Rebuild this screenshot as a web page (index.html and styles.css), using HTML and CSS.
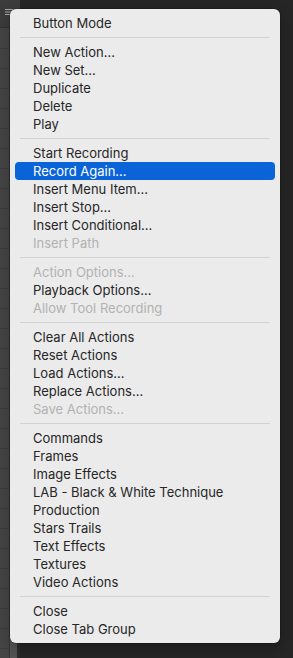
FILE: index.html
```html
<!DOCTYPE html>
<html>
<head>
<meta charset="utf-8">
<link rel="stylesheet" href="styles.css">
</head>
<body>
<div class="app">
  <div class="panel">
    <div class="panel-head">
      <svg class="burger" width="8" height="7" viewBox="0 0 8 7"><path d="M0 0.5H8M0 3H8M0 5.5H8" stroke="#a8a8a8" stroke-width="1"/></svg>
    </div>
    <div class="panel-body">
      <div class="rows">
        <div class="row"></div><div class="row"></div><div class="row"></div><div class="row"></div>
        <div class="row"></div><div class="row"></div><div class="row"></div><div class="row"></div>
        <div class="row"></div><div class="row"></div><div class="row"></div><div class="row"></div>
        <div class="row"></div><div class="row"></div><div class="row"></div><div class="row"></div>
        <div class="row"></div><div class="row"></div><div class="row"></div><div class="row"></div>
        <div class="row"></div><div class="row"></div><div class="row"></div><div class="row"></div>
        <div class="row"></div><div class="row"></div><div class="row"></div><div class="row"></div>
        <div class="row"></div><div class="row"></div><div class="row"></div>
      </div>
      <div class="gutter"></div>
      <div class="track">
        <div class="track-fill"></div>
        <div class="track-thumb"></div>
      </div>
    </div>
  </div>
  <div class="main"></div>

  <div class="menu">
    <div class="item">Button Mode</div>
    <div class="sep"></div>
    <div class="item">New Action...</div>
    <div class="item">New Set...</div>
    <div class="item">Duplicate</div>
    <div class="item">Delete</div>
    <div class="item">Play</div>
    <div class="sep"></div>
    <div class="item">Start Recording</div>
    <div class="item active">Record Again...</div>
    <div class="item">Insert Menu Item...</div>
    <div class="item">Insert Stop...</div>
    <div class="item">Insert Conditional...</div>
    <div class="item disabled">Insert Path</div>
    <div class="sep"></div>
    <div class="item disabled">Action Options...</div>
    <div class="item">Playback Options...</div>
    <div class="item disabled">Allow Tool Recording</div>
    <div class="sep"></div>
    <div class="item">Clear All Actions</div>
    <div class="item">Reset Actions</div>
    <div class="item">Load Actions...</div>
    <div class="item">Replace Actions...</div>
    <div class="item disabled">Save Actions...</div>
    <div class="sep"></div>
    <div class="item">Commands</div>
    <div class="item">Frames</div>
    <div class="item">Image Effects</div>
    <div class="item">LAB - Black &amp; White Technique</div>
    <div class="item">Production</div>
    <div class="item">Stars Trails</div>
    <div class="item">Text Effects</div>
    <div class="item">Textures</div>
    <div class="item">Video Actions</div>
    <div class="sep"></div>
    <div class="item">Close</div>
    <div class="item">Close Tab Group</div>
  </div>
</div>
</body>
</html>
```

FILE: styles.css
```css
* { box-sizing: border-box; }
html, body { margin: 0; padding: 0; }
body {
  width: 293px;
  height: 658px;
  overflow: hidden;
  background: #282828;
  font-family: Inter, "Noto Sans", sans-serif;
}
.app {
  position: relative;
  display: flex;
  width: 293px;
  height: 658px;
}
.panel {
  width: 20px;
  display: flex;
  flex-direction: column;
}
.panel-head {
  height: 28px;
  background: #3c3c3c;
  border-bottom: 1px solid #333;
  padding: 9px 0 0 5px;
}
.burger { display: block; }
.panel-body {
  flex: 1;
  display: flex;
  background: #2c2c2c;
}
.rows {
  width: 9px;
  background: #464646;
  display: flex;
  flex-direction: column;
  padding-top: 1px;
}
.row {
  height: 20px;
  border-bottom: 1px solid #3d3d3d;
}
.gutter {
  width: 1px;
  background: #383838;
}
.track {
  width: 7px;
  display: flex;
  flex-direction: column;
}
.track-fill { flex: 1; }
.track-thumb {
  height: 76px;
  background: #555555;
}
.main {
  flex: 1;
  background: #262626;
}
.menu {
  position: absolute;
  left: 10px;
  top: 9px;
  width: 270px;
  height: 634px;
  padding: 5px;
  background: #ebebeb;
  border-radius: 6px;
  box-shadow: 0 0 0 0.5px rgba(0,0,0,0.35), 0 6px 16px rgba(0,0,0,0.3);
  display: flex;
  flex-direction: column;
}
.item {
  height: 18px;
  line-height: 18px;
  padding-left: 18px;
  font-size: 13px;
  color: #262626;
  border-radius: 4px;
  white-space: nowrap;
}
.item.active {
  background: #0a64d8;
  color: #ffffff;
}
.item.disabled {
  color: #b2b2b2;
}
.sep {
  height: 11px;
  display: flex;
  align-items: center;
  padding: 0 5px;
}
.sep::before {
  content: "";
  display: block;
  flex: 1;
  height: 1px;
  background: #d2d2d2;
}
```
